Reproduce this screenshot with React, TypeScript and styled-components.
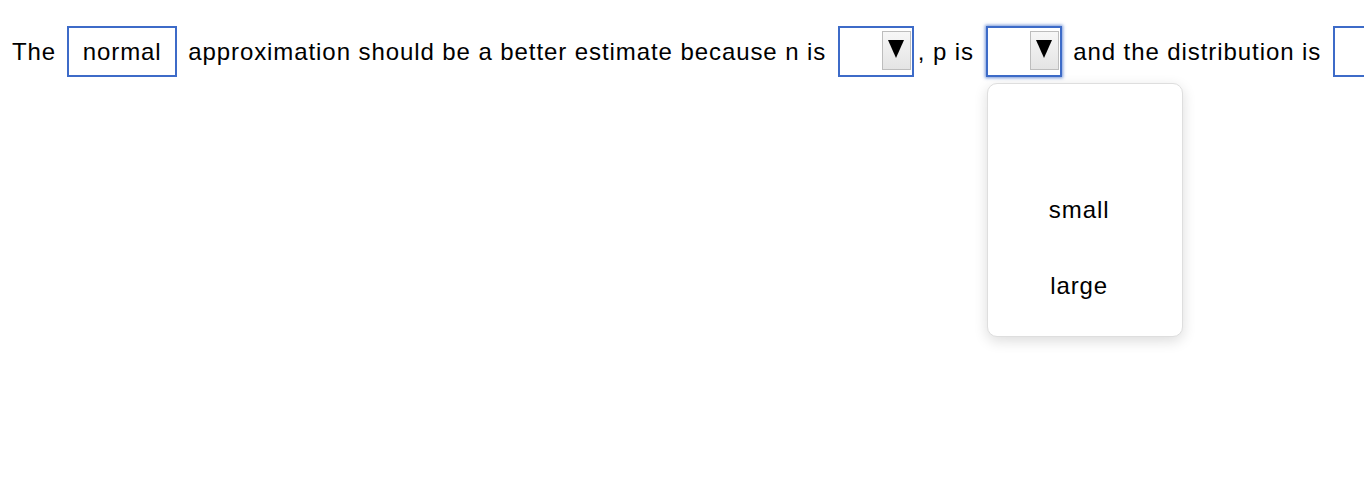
import React from "react";
import styled, { createGlobalStyle, css } from "styled-components";

const Global = createGlobalStyle`
  html, body { margin: 0; padding: 0; background: #ffffff; }
  body { font-family: "Liberation Sans", Arial, Helvetica, sans-serif; color: #000; }
`;

const Page = styled.div`
  width: 1364px;
  height: 488px;
  overflow: hidden;
  padding: 26px 0 0 12px;
  box-sizing: border-box;
`;

const Sentence = styled.div`
  display: flex;
  align-items: center;
  white-space: pre;
  font-size: 24px;
  line-height: 28px;
  letter-spacing: 0.92px;
`;

const Words = styled.span`
  white-space: pre;
  flex: none;
`;

const Box = styled.span<{ $focused?: boolean }>`
  position: relative;
  flex: none;
  display: inline-flex;
  align-items: center;
  box-sizing: border-box;
  height: 51px;
  margin: 0 4px;
  border: 2px solid #3d6bc8;
  background: #fff;
  ${(p) =>
    p.$focused &&
    css`
      box-shadow: 0 0 3px 1px rgba(61, 107, 200, 0.7);
    `}
`;

const FilledBox = styled(Box)`
  margin-left: 3px;
  padding: 0 13px 0 14px;
`;

const SelectBox = styled(Box)`
  width: 76px;
  justify-content: flex-end;
  padding-right: 1px;
`;

const EmptyBox = styled(Box)`
  width: 76px;
`;

const Arrow = styled.span`
  box-sizing: border-box;
  width: 29px;
  height: 39px;
  margin-top: -2px;
  border: 1px solid #bdbdbd;
  background: linear-gradient(#f7f7f7, #e4e4e4);
  display: flex;
  align-items: center;
  justify-content: center;
`;

const Triangle = styled.span`
  width: 0;
  height: 0;
  margin-top: -4px;
  border-left: 8.5px solid transparent;
  border-right: 8.5px solid transparent;
  border-top: 18px solid #000;
`;

const Menu = styled.div`
  position: absolute;
  top: calc(100% + 8px);
  left: -1px;
  width: 196px;
  box-sizing: border-box;
  padding: 12px 11px 12px 0;
  background: #fff;
  border: 1px solid #dedede;
  border-radius: 10px;
  box-shadow: 0 4px 14px rgba(0, 0, 0, 0.14);
  z-index: 2;
`;

const Option = styled.div`
  height: 76px;
  display: flex;
  align-items: center;
  justify-content: center;
  font-size: 24px;
`;

export default function App() {
  return (
    <>
      <Global />
      <Page>
        <Sentence>
          <Words>The </Words>
          <FilledBox>normal</FilledBox>
          <Words> approximation should be a better estimate because n is </Words>
          <SelectBox>
            <Arrow>
              <Triangle />
            </Arrow>
          </SelectBox>
          <Words>, p is </Words>
          <SelectBox $focused>
            <Arrow>
              <Triangle />
            </Arrow>
            <Menu>
              <Option>{"\u00a0"}</Option>
              <Option>small</Option>
              <Option>large</Option>
            </Menu>
          </SelectBox>
          <Words> and the distribution is </Words>
          <EmptyBox />
        </Sentence>
      </Page>
    </>
  );
}
